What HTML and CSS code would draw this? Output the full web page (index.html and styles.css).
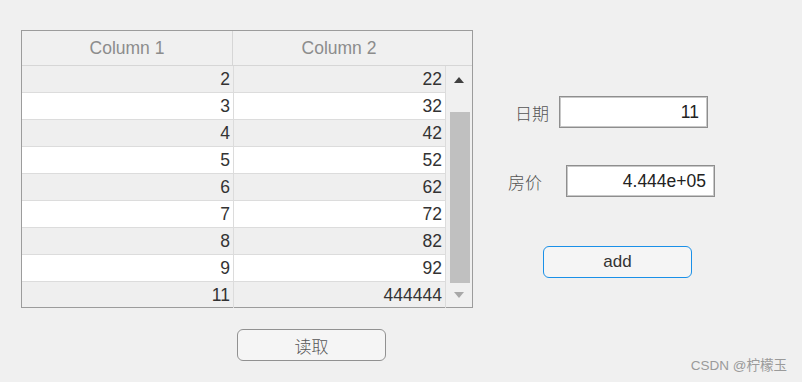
FILE: index.html
```html
<!DOCTYPE html>
<html lang="zh-CN">
<head>
    <meta charset="UTF-8">
    <meta name="viewport" content="width=device-width, initial-scale=1.0">
    <title>房价</title>
    <link rel="stylesheet" href="styles.css">
</head>
<body>
    <div class="app">
        <div class="left">
            <div class="table">
                <div class="thead">
                    <div class="th">Column 1</div>
                    <div class="th">Column 2</div>
                    <div class="th-blank"></div>
                </div>
                <div class="tbody">
                    <div class="rows">
                        <div class="tr odd"><div class="td">2</div><div class="td">22</div></div>
                        <div class="tr"><div class="td">3</div><div class="td">32</div></div>
                        <div class="tr odd"><div class="td">4</div><div class="td">42</div></div>
                        <div class="tr"><div class="td">5</div><div class="td">52</div></div>
                        <div class="tr odd"><div class="td">6</div><div class="td">62</div></div>
                        <div class="tr"><div class="td">7</div><div class="td">72</div></div>
                        <div class="tr odd"><div class="td">8</div><div class="td">82</div></div>
                        <div class="tr"><div class="td">9</div><div class="td">92</div></div>
                        <div class="tr odd last"><div class="td">11</div><div class="td">444444</div></div>
                    </div>
                    <div class="scrollbar">
                        <div class="arrow up"></div>
                        <div class="thumb"></div>
                        <div class="arrow down"></div>
                    </div>
                </div>
            </div>
            <button class="btn read">读取</button>
        </div>

        <div class="right">
            <div class="field field-date">
                <label for="date">日期</label>
                <input type="text" id="date" value="11">
            </div>
            <div class="field field-price">
                <label for="price">房价</label>
                <input type="text" id="price" value="4.444e+05">
            </div>
            <button class="btn add">add</button>
        </div>
    </div>

    <div class="watermark">CSDN @柠檬玉</div>
</body>
</html>
```

FILE: styles.css
```css
body {
    font-family: "Liberation Sans", Arial, "Noto Sans CJK SC", sans-serif;
    margin: 0;
    background-color: #f0f0f0;
    width: 802px;
    height: 382px;
    overflow: hidden;
    position: relative;
}

.app {
    display: flex;
    padding: 30px 0 0 21px;
}

.left {
    display: flex;
    flex-direction: column;
    align-items: flex-start;
}

.table {
    width: 450px;
    border: 1px solid #9c9c9c;
    background-color: #f0f0f0;
}

.thead {
    display: grid;
    grid-template-columns: 211px 212px 27px;
    height: 34px;
    border-bottom: 1px solid #d6d6d6;
}

.th {
    color: #8c8c8c;
    font-size: 17.5px;
    line-height: 34px;
    text-align: center;
}

.th:first-child {
    border-right: 1px solid #d6d6d6;
}

.tbody {
    display: flex;
}

.rows {
    width: 424px;
}

.tr {
    display: grid;
    grid-template-columns: 211px 212px;
    height: 26px;
    border-bottom: 1px solid #dcdcdc;
    background-color: #fff;
}

.tr.odd {
    background-color: #efefef;
}

.tr.last {
    height: 25px;
    border-bottom: none;
}

.td {
    font-size: 17.5px;
    line-height: 26px;
    color: #333;
    text-align: right;
    padding-right: 3px;
    border-right: 1px solid #dcdcdc;
}

.td:first-child {
    width: 208px;
}

.td:last-child {
    width: 209px;
}

.scrollbar {
    width: 26px;
    display: flex;
    flex-direction: column;
    align-items: center;
    background-color: #f0f0f0;
}

.arrow {
    width: 0;
    height: 0;
    border-left: 5px solid transparent;
    border-right: 5px solid transparent;
}

.arrow.up {
    margin-top: 11px;
    border-bottom: 6px solid #404040;
}

.arrow.down {
    margin-top: 9px;
    border-top: 6px solid #a8a8a8;
}

.thumb {
    width: 20px;
    height: 171px;
    margin-top: 29px;
    margin-left: 2px;
    background-color: #c0c0c0;
}

.btn {
    width: 149px;
    height: 32px;
    background-color: #f5f5f5;
    border-radius: 6px;
    font-size: 17px;
    color: #333;
    padding: 0;
    cursor: pointer;
}

.read {
    margin-top: 21px;
    margin-left: 216px;
    border: 1px solid #919191;
    color: #555;
    font-family: "Noto Sans CJK SC", sans-serif;
    font-weight: 300;
}

.right {
    display: flex;
    flex-direction: column;
    align-items: flex-start;
    margin-left: 35px;
}

.field {
    display: flex;
    align-items: center;
}

.field label {
    font-family: "Noto Sans CJK SC", sans-serif;
    font-weight: 300;
    font-size: 17px;
    color: #555;
}

.field input {
    width: 149px;
    height: 32px;
    box-sizing: border-box;
    border: 1px solid #8e8e8e;
    box-shadow: inset 0 0 0 1px #c8c8c8;
    background-color: #fff;
    font-family: "Liberation Sans", Arial, sans-serif;
    font-size: 17.5px;
    color: #222;
    text-align: right;
    padding: 0 8px 0 0;
    outline: none;
}

.field-date {
    margin-top: 66px;
    margin-left: 7px;
    gap: 10px;
}

.field-price {
    margin-top: 37px;
    gap: 24px;
}

.add {
    margin-top: 49px;
    margin-left: 35px;
    border: 1.5px solid #1a90e8;
}

.watermark {
    position: absolute;
    right: 15px;
    bottom: 8px;
    font-size: 13.5px;
    color: #9a9a9a;
}
```
